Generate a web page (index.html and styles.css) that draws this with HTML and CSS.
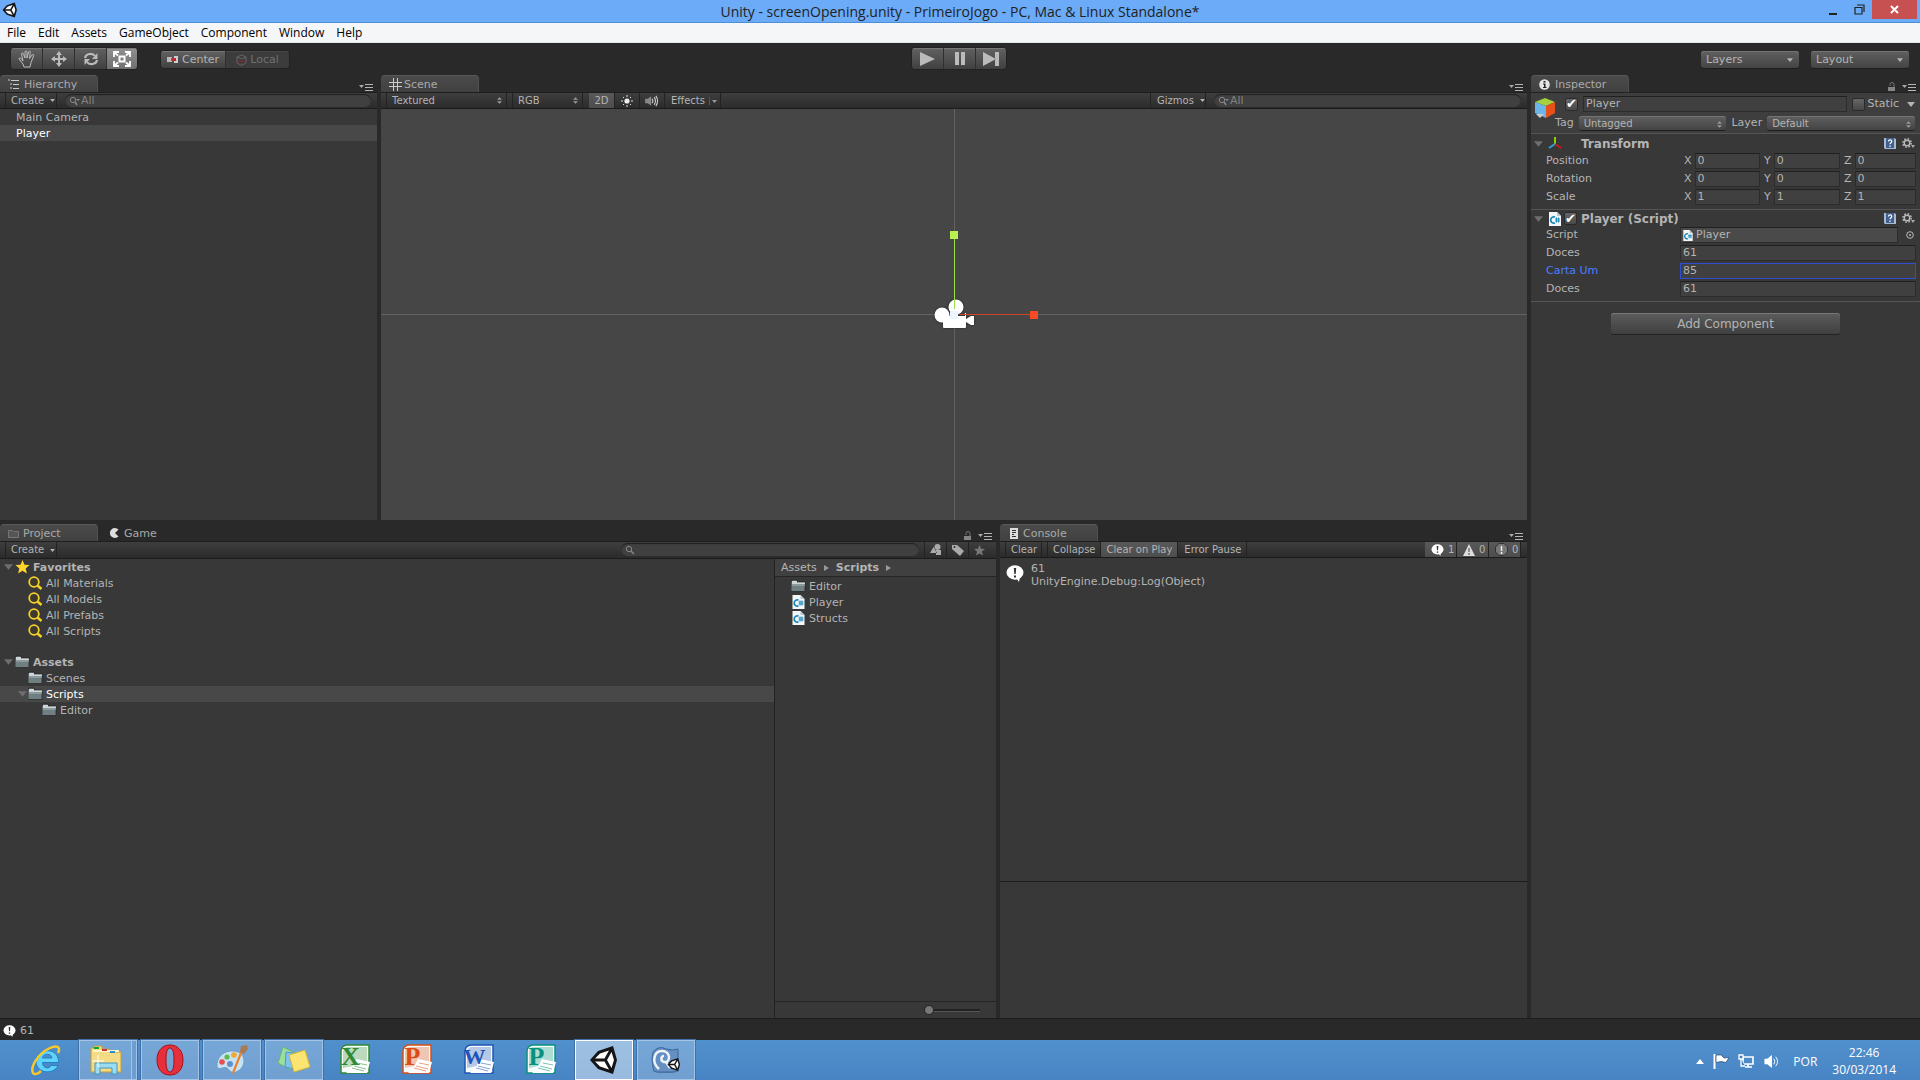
FILE: index.html
```html
<!DOCTYPE html>
<html lang="en">
<head>
<meta charset="utf-8">
<title>Unity - screenOpening.unity - PrimeiroJogo</title>
<link rel="stylesheet" href="styles.css">
</head>
<body>
<svg class="sprite" aria-hidden="true">
  <symbol id="unity" viewBox="0 0 30 30"><path d="M1 15 9 6 24 1 28 15 24 29 9 24Z" fill="#151515"/><path d="M6 13.500 11 8.500 20 5.500 15.500 13.500ZM6 16.500 15.500 16.500 20 24.500 11 21.500ZM22.500 7 25 15 22.500 23 18 15Z" fill="#fff"/></symbol>
  <symbol id="menu" viewBox="0 0 14 8"><path d="M0 2h5L2.500 5z" fill="#aaa"/><path d="M6 1.500h8M6 4.500h8M6 7.500h8" stroke="#b4b4b4"/></symbol>
  <symbol id="down" viewBox="0 0 8 5"><path d="M0 0h8L4 5z" fill="currentColor"/></symbol>
  <symbol id="updown" viewBox="0 0 6 8"><path d="M0 3h6L3 0zM0 5h6L3 8z" fill="#999"/></symbol>
  <symbol id="right" viewBox="0 0 5 6"><path d="M0 0v6l5-3z" fill="#999"/></symbol>
  <symbol id="search" viewBox="0 0 12 10"><circle cx="4" cy="4" r="2.700" fill="none" stroke="#888"/><path d="m6 6 3 3" stroke="#888" stroke-width="1.500"/></symbol>
  <symbol id="searchdown" viewBox="0 0 12 10"><circle cx="4" cy="4" r="2.700" fill="none" stroke="#888"/><path d="m6 6 2 3" stroke="#888" stroke-width="1.500"/><path d="M7 3h4L9 5z" fill="#888"/></symbol>
  <symbol id="mag" viewBox="0 0 15 14"><circle cx="6" cy="6" r="4.800" fill="#3b3a2c" stroke="#f5d02a" stroke-width="1.800"/><path d="m9.500 9.500 4 3.500" stroke="#f5d02a" stroke-width="2.500"/></symbol>
  <symbol id="folder" viewBox="0 0 15 12"><path d="M0 11.500V1h1V0h5v2h8v9.500z" fill="#6f7f82" stroke="#222" stroke-width=".7"/><path d="M1 1h5v1.500h8V4H1z" fill="#cfd5d6"/><path d="M1 5h13" stroke="#a9b6b8"/></symbol>
  <symbol id="lock" viewBox="0 0 8 9"><path d="M2 4V2.500a2 2 0 0 1 4 0V5" fill="none" stroke="#777"/><path d="M0 5h7v4H0z" fill="#858585"/></symbol>
  <symbol id="cs" viewBox="0 0 12 14"><path d="M0 0h8l4 4v10H0z" fill="#f3f6f8"/><path d="m8 0 4 4H8z" fill="#b8c6cf"/><path d="M6 5a3.200 3.200 0 1 0 0 6" fill="none" stroke="#1685b8" stroke-width="1.700"/><path d="M7.500 5.500v5M9.500 5.500v5M6 7h5M6 9h5" stroke="#1685b8" stroke-width=".9"/></symbol>
  <symbol id="info" viewBox="0 0 18 17"><ellipse cx="9" cy="7.500" rx="8.500" ry="7.200" fill="#fff"/><path d="m10 13 3 4 1-5z" fill="#fff"/><path d="M7.800 3h2.400l-.5 6H8.300zM8 10.500h2v2H8z" fill="#333"/></symbol>
  <symbol id="book" viewBox="0 0 12 13"><path d="M0 1h10l2 1v10H1L0 11z" fill="#a9b9cf"/><path d="M2 1h8v10H2z" fill="#40608f"/><path d="M4.500 4.500c0-2.500 3.500-2 3.200.2C7.500 6 6 6 6 7.300M6 8.500V10" fill="none" stroke="#fff" stroke-width="1.200"/></symbol>
  <symbol id="gear" viewBox="0 0 13 11"><circle cx="5" cy="5" r="2.800" fill="none" stroke="#b9b9b9" stroke-width="1.500"/><circle cx="5" cy="5" r="4.200" fill="none" stroke="#b9b9b9" stroke-width="1.500" stroke-dasharray="1.650 1.650"/><path d="M9 7h4l-2 3z" fill="#aaa"/></symbol>
  <symbol id="star" viewBox="0 0 14 14"><path d="m7 0 2 4.700 5 .4-3.800 3.300L11.400 13.500 7 10.800 2.600 13.500 3.800 8.400 0 5.100l5-.4z" fill="currentColor"/></symbol>
  <symbol id="speaker" viewBox="0 0 16 14"><path d="M0 4.500h3l4-3v11l-4-3H0z" fill="#888"/><path d="M8 4.500q2 2.500 0 5M10.500 2.500q3 4.500 0 9M12.500 1q4 6 0 12" fill="none" stroke="#ccc" stroke-width="1.300"/></symbol>
  <symbol id="sound" viewBox="0 0 16 16"><path d="M1 5h3l5-4v14l-5-4H1z" fill="currentColor"/><path d="M11 5q2 3 0 6M13 3q4 5 0 10" fill="none" stroke="currentColor"/></symbol>
  <symbol id="office" viewBox="0 0 30 30"><path d="M7 1h22v28H1V7a6 6 0 0 1 6-6z" fill="#f7fbf8" stroke="currentColor" stroke-width="1.500"/><path d="M8 3h19v16L3 24V8a5 5 0 0 1 5-5z" fill="currentColor" opacity=".3"/><path d="m16 15 14 3-3 11H6l6-6z" fill="#fff"/><path d="m14 22 12 3M12 24l12 3M17 19l10 2" stroke="currentColor" opacity=".55"/></symbol>
</svg>

<header class="titlebar">
  <svg class="app-logo"><use href="#unity"/></svg>
  <h1 class="title">Unity - screenOpening.unity - PrimeiroJogo - PC, Mac &amp; Linux Standalone*</h1>
  <div class="window-buttons">
    <button class="win" aria-label="Minimize"><svg width="10" height="11"><path d="M1 10h8" stroke="#222" stroke-width="2"/></svg></button>
    <button class="win" aria-label="Restore"><svg width="11" height="11"><path d="M3 1h7v7M1 3.500h7V10H1z" fill="none" stroke="#222" stroke-width="1.200"/></svg></button>
    <button class="win close" aria-label="Close"><svg width="9" height="9"><path d="m1 1 7 7M8 1 1 8" stroke="#fff" stroke-width="2"/></svg></button>
  </div>
</header>

<nav class="menubar">
  <button>File</button><button>Edit</button><button>Assets</button><button>GameObject</button><button>Component</button><button>Window</button><button>Help</button>
</nav>

<div class="main-toolbar">
  <div class="tools">
    <div class="group">
      <button aria-label="Hand"><svg width="18" height="18" viewBox="0 0 18 18"><path d="M6 17 5 14 1 9c0-1.500 1.500-1.500 2.500 0L5 11 3.500 4c0-1.500 1.500-1.500 2 0L7 8V2c.2-1.500 1.800-1.500 2 0v6l1.500-6c.5-1.200 2-1 1.800.4L11.500 8.500 14 5c1-1 2.200-.2 1.600 1L13 12.500 12 17z" fill="none" stroke="#bbb"/></svg></button>
      <button aria-label="Move"><svg width="16" height="16" viewBox="0 0 16 16"><path d="M8 2v12M2 8h12" stroke="#bbb" stroke-width="2"/><path d="m8 0 3 4H5zM8 16l3-4H5zM0 8l4-3v6zM16 8l-4-3v6z" fill="#bbb"/></svg></button>
      <button aria-label="Rotate"><svg width="16" height="14" viewBox="0 0 16 14"><path d="M2 6c1-5 8-5 10-2M14 8c-1 5-8 5-10 2" fill="none" stroke="#bbb" stroke-width="2.200"/><path d="M14.500 1v6H9zM1.500 13V7H7z" fill="#bbb"/></svg></button>
      <button class="on" aria-label="Scale"><svg width="18" height="16" viewBox="0 0 18 16"><path d="M6.500 5.500h5v5h-5z" fill="none" stroke="#fff" stroke-width="2"/><path d="m2 2 3 2.500M16 2l-3 2.500M2 14l3-2.500M16 14l-3-2.500M1 6V1h5M12 1h5v5M1 10v5h5M12 15h5v-5" fill="none" stroke="#fff" stroke-width="1.800"/></svg></button>
    </div>
    <div class="group pivot">
      <button><svg width="12" height="8"><path d="M0 1h5v5H0z" fill="#bbb"/><path d="M7 0h4v7H7V5h2V2H7z" fill="#ccc"/><path d="M4 3.500h4" stroke="#d23" stroke-width="2.500"/></svg>Center</button>
      <button class="dim"><svg width="11" height="12" viewBox="0 0 11 12"><path d="m5.500 1 4.500 2v6l-4.500 2.500L1 9V3zM1 3l4.500 2L10 3" fill="none" stroke="#666"/><path d="M5.500 5v6M1 9l4.500-2.500L10 9" stroke="#8a2525" fill="none"/></svg>Local</button>
    </div>
  </div>
  <div class="group play">
    <button aria-label="Play"><svg width="15" height="14"><path d="M0 0v14l15-7z" fill="#bbb"/></svg></button>
    <button aria-label="Pause"><svg width="10" height="13"><path d="M0 0h4v13H0zM6 0h4v13H6z" fill="#bbb"/></svg></button>
    <button aria-label="Step"><svg width="16" height="14"><path d="M0 0v14l13-7zM12 0h4v14h-4z" fill="#bbb"/></svg></button>
  </div>
  <div class="toolbar-selects">
    <div class="drop"><select aria-label="Layers"><option>Layers</option></select><svg width="6" height="4"><use href="#down"/></svg></div>
    <div class="drop"><select aria-label="Layout"><option>Layout</option></select><svg width="6" height="4"><use href="#down"/></svg></div>
  </div>
</div>

<main class="workspace">
  <div class="docks">
    <div class="dock-top">
      <section class="panel">
        <div class="tabs">
          <button class="tab on"><svg width="12" height="10"><path d="M0 1h2M3 1.500h8M2 5h2M5 5.500h6M2 9h2M5 9.500h6" stroke="#ccc"/></svg>Hierarchy</button>
          <span class="corner"><svg class="menu"><use href="#menu"/></svg></span>
        </div>
        <div class="strip">
          <button class="cell create">Create<svg width="5" height="3" viewBox="0 0 8 5"><use href="#down"/></svg></button>
          <label class="search grow"><svg width="12" height="10"><use href="#searchdown"/></svg><input placeholder="All" aria-label="Search hierarchy"></label>
        </div>
        <ul class="list body hierarchy">
          <li>Main Camera</li>
          <li class="selected">Player</li>
        </ul>
      </section>

      <section class="panel">
        <div class="tabs">
          <button class="tab on scene-tab"><svg width="13" height="13"><path d="M4.500 0v13M8.500 0v13M0 4.500h13M0 8.500h13" stroke="#ccc"/></svg>Scene</button>
          <span class="corner"><svg class="menu"><use href="#menu"/></svg></span>
        </div>
        <div class="strip">
          <div class="cell mode"><select aria-label="Draw mode"><option>Textured</option></select><svg width="5" height="7"><use href="#updown"/></svg></div>
          <div class="cell mode rgb"><select aria-label="Render mode"><option>RGB</option></select><svg width="5" height="7"><use href="#updown"/></svg></div>
          <button class="cell toggle pressed">2D</button>
          <button class="cell toggle" aria-label="Lighting"><svg width="12" height="12" viewBox="0 0 12 12"><circle cx="6" cy="6" r="2.600" fill="#eee"/><path d="M6 0v2M6 10v2M0 6h2M10 6h2M2 2l1 1M9 9l1 1M10 2 9 3M3 9l-1 1" stroke="#ddd"/></svg></button>
          <button class="cell toggle" aria-label="Audio"><svg width="14" height="12"><use href="#speaker"/></svg></button>
          <button class="cell effects">Effects<svg width="8" height="8" viewBox="0 0 8 8"><path d="M.5 0v8" stroke="#555"/><path d="M3 3h5L5.500 6z" fill="#999"/></svg></button>
          <span class="grow"></span>
          <button class="cell gizmos">Gizmos<svg width="5" height="3" viewBox="0 0 8 5"><use href="#down"/></svg></button>
          <label class="search scene-search"><svg width="12" height="10"><use href="#searchdown"/></svg><input placeholder="All" aria-label="Search scene"></label>
        </div>
        <div class="body scene">
          <svg class="gizmo" viewBox="0 0 170 170"><g filter="drop-shadow(0 0 1px #222)"><circle cx="73" cy="85" r="7.500" fill="#fff"/><circle cx="87" cy="77" r="7.500" fill="#fff"/><path d="M74 86h22v-3h1v14q0 1-1 1H75q-1 0-1-1zM97 89l5-3h3v9h-3l-5-3z" fill="#fff"/></g><path d="M85.500 9v70" stroke="#9be04a"/><path d="M91 84.500h75" stroke="#d04425"/><path d="M81 1h8v8h-8z" fill="#b9f24e"/><path d="M161 81h8v8h-8z" fill="#f84a24"/><path d="M81 81h8v8h-8z" fill="#edf4ff"/></svg>
        </div>
      </section>
    </div>

    <div class="dock-bottom">
      <section class="panel">
        <div class="tabs">
          <button class="tab on"><svg width="11" height="9"><path d="M.5 1.500h4l1 1h5v6H.5z" fill="#555" stroke="#777"/></svg>Project</button>
          <button class="tab"><svg width="10" height="10"><path d="M8.500 1.500a5 5 0 1 0 0 7L5 5z" fill="#ddd"/></svg>Game</button>
          <span class="corner"><svg width="8" height="9"><use href="#lock"/></svg><svg class="menu"><use href="#menu"/></svg></span>
        </div>
        <div class="strip tall">
          <button class="cell create">Create<svg width="5" height="3" viewBox="0 0 8 5"><use href="#down"/></svg></button>
          <span class="grow"></span>
          <label class="search project-search"><svg width="12" height="10"><use href="#search"/></svg><input aria-label="Search project"></label>
          <button class="cell filter" aria-label="Filter by type"><svg width="12" height="12"><path d="M0 9h7L3.500 3zM6 6h5v5H6z" fill="#aaa"/><circle cx="7.500" cy="3" r="3" fill="#aaa"/></svg></button>
          <button class="cell filter" aria-label="Filter by label"><svg width="12" height="12"><path d="M0 1h5l7 6-4 5-8-7z" fill="#aaa"/><circle cx="2.500" cy="3" r="1" fill="#333"/></svg></button>
          <button class="cell filter faint" aria-label="Save search"><svg width="11" height="11"><use href="#star"/></svg></button>
        </div>
        <div class="body project">
          <ul class="list tree">
            <li class="root"><svg class="fold"><use href="#down"/></svg><svg class="ico gold"><use href="#star"/></svg>Favorites</li>
            <li class="l1"><svg class="ico"><use href="#mag"/></svg>All Materials</li>
            <li class="l1"><svg class="ico"><use href="#mag"/></svg>All Models</li>
            <li class="l1"><svg class="ico"><use href="#mag"/></svg>All Prefabs</li>
            <li class="l1"><svg class="ico"><use href="#mag"/></svg>All Scripts</li>
            <li class="root spaced"><svg class="fold"><use href="#down"/></svg><svg class="ico"><use href="#folder"/></svg>Assets</li>
            <li class="l1"><svg class="ico"><use href="#folder"/></svg>Scenes</li>
            <li class="l1 open selected"><svg class="fold"><use href="#down"/></svg><svg class="ico"><use href="#folder"/></svg>Scripts</li>
            <li class="l2"><svg class="ico"><use href="#folder"/></svg>Editor</li>
          </ul>
          <div class="files">
            <nav class="crumbs"><a href="#">Assets</a><svg width="5" height="6"><use href="#right"/></svg><a href="#" class="current">Scripts</a><svg width="5" height="6"><use href="#right"/></svg></nav>
            <ul class="list">
              <li><svg class="ico"><use href="#folder"/></svg>Editor</li>
              <li><svg class="ico"><use href="#cs"/></svg>Player</li>
              <li><svg class="ico"><use href="#cs"/></svg>Structs</li>
            </ul>
            <div class="zoom-row"><input type="range" min="0" max="100" value="0" aria-label="Icon size"></div>
          </div>
        </div>
      </section>

      <section class="panel">
        <div class="tabs">
          <button class="tab on console-tab"><svg width="9" height="11"><path d="M0 0h8v11H0z" fill="#ddd"/><path d="M2 2.500h4M2 4.500h4M2 6.500h2M2 8.500h4" stroke="#333"/></svg>Console</button>
          <span class="corner"><svg class="menu"><use href="#menu"/></svg></span>
        </div>
        <div class="strip">
          <button class="cell clear">Clear</button>
          <button class="cell con collapse">Collapse</button>
          <button class="cell con pressed">Clear on Play</button>
          <button class="cell con">Error Pause</button>
          <span class="grow"></span>
          <button class="cell count pressed"><svg width="13" height="12"><use href="#info"/></svg>1</button>
          <button class="cell count pressed"><svg width="12" height="12"><path d="m6 0 6 12H0z" fill="#ddd"/><path d="M6 4v4M6 9v2" stroke="#777" stroke-width="1.500"/></svg>0</button>
          <button class="cell count pressed"><svg width="13" height="13"><path d="M4 .5h5L12.500 4v5L9 12.500H4L.5 9V4z" fill="#777" stroke="#333"/><path d="M6.500 3v5M6.500 9v2" stroke="#eee" stroke-width="1.500"/></svg>0</button>
        </div>
        <div class="body console">
          <div class="log"><svg width="18" height="17"><use href="#info"/></svg><p>61<br>UnityEngine.Debug:Log(Object)</p></div>
          <div class="detail"></div>
        </div>
      </section>
    </div>
  </div>

  <section class="panel inspector">
    <div class="tabs">
      <button class="tab on inspector-tab"><svg width="11" height="11"><circle cx="5.500" cy="5.500" r="5.300" fill="#e5e5e5"/><path d="M4.500 2h2v1.500h-2zM4 4.500h2.500V8H7.500v1H4V8h1V5.500H4z" fill="#222"/></svg>Inspector</button>
      <span class="corner"><svg width="8" height="9"><use href="#lock"/></svg><svg class="menu"><use href="#menu"/></svg></span>
    </div>
    <div class="body">
      <div class="object">
        <svg class="cube" viewBox="0 0 20 20"><path d="m10 0 10 4-9 4L0 4z" fill="#a5cf3c"/><path d="m0 4 11 4v12L0 15z" fill="#6bb5e8"/><path d="m20 4-9 4v12l9-5z" fill="#e8501a"/><path d="M1 16h8l-4 4z" fill="#ccc"/></svg>
        <div class="object-fields">
          <div class="object-row identity">
            <input type="checkbox" checked aria-label="Active">
            <input class="field name" value="Player" aria-label="Name">
            <label class="static"><input type="checkbox">Static</label>
            <svg width="8" height="5"><use href="#down"/></svg>
          </div>
          <div class="object-row tags">
            <label for="tag">Tag</label><div class="drop small"><select id="tag"><option>Untagged</option></select><svg width="5" height="7"><use href="#updown"/></svg></div>
            <label for="layer">Layer</label><div class="drop small"><select id="layer"><option>Default</option></select><svg width="5" height="7"><use href="#updown"/></svg></div>
          </div>
        </div>
      </div>

      <div class="component">
        <h2><svg class="fold"><use href="#down"/></svg><svg width="14" height="14" viewBox="0 0 14 14"><path d="M7 8V0" stroke="#8bd000" stroke-width="2"/><path d="m7 7-6 4" stroke="#29a5e0" stroke-width="2"/><path d="m7 7 6 4" stroke="#d01818" stroke-width="2"/></svg><span class="comp-name wide">Transform</span><svg width="12" height="13"><use href="#book"/></svg><svg width="13" height="11"><use href="#gear"/></svg></h2>
        <div class="vector"><span>Position</span><label>X<input class="field" value="0"></label><label>Y<input class="field" value="0"></label><label>Z<input class="field" value="0"></label></div>
        <div class="vector"><span>Rotation</span><label>X<input class="field" value="0"></label><label>Y<input class="field" value="0"></label><label>Z<input class="field" value="0"></label></div>
        <div class="vector"><span>Scale</span><label>X<input class="field" value="1"></label><label>Y<input class="field" value="1"></label><label>Z<input class="field" value="1"></label></div>
      </div>

      <div class="component script">
        <h2><svg class="fold"><use href="#down"/></svg><svg width="14" height="14"><use href="#cs"/></svg><input type="checkbox" checked aria-label="Enabled"><span class="comp-name">Player (Script)</span><svg width="12" height="13"><use href="#book"/></svg><svg width="13" height="11"><use href="#gear"/></svg></h2>
        <div class="prop"><span>Script</span><button class="field object-ref"><svg width="10" height="11"><use href="#cs"/></svg>Player</button><svg width="8" height="8"><circle cx="4" cy="4" r="3.300" fill="none" stroke="#bbb"/><circle cx="4" cy="4" r="1" fill="#bbb"/></svg></div>
        <label class="prop"><span>Doces</span><input class="field" value="61"></label>
        <label class="prop active"><span>Carta Um</span><input class="field" value="85"></label>
        <label class="prop"><span>Doces</span><input class="field" value="61"></label>
      </div>
      <button class="add">Add Component</button>
    </div>
  </section>
</main>

<div class="status"><svg width="13" height="12"><use href="#info"/></svg>61</div>

<footer class="taskbar">
  <div class="apps">
    <button aria-label="Internet Explorer"><svg width="32" height="32" viewBox="0 0 32 32"><path d="M28.500 18.500H12.500c0 6 7 7 8.500 3h7C24 31 6 30 6 17 6 4 29 2 28.500 18.500zM12.500 14h9.500c-.5-5-9-5-9.500 0z" fill="#63d2fa" stroke="#1c83c8"/><path d="M28 9c3-6-1-9-10-4C8 10 0 23 3 29c1 2 5 1 8-2" fill="none" stroke="#f8c928" stroke-width="2.500"/></svg></button>
    <button class="running stacked" aria-label="File Explorer"><svg width="34" height="32" viewBox="0 0 34 32"><path d="M2 28V4h3V2h8v3h7v3h12v20z" fill="#f5dc84" stroke="#c79c39"/><path d="M4 7h26" stroke="#fff6c8" stroke-width="2"/><path d="M5 3h5v2H5z" fill="#0a3"/><path d="M13 5h5v2h-5z" fill="#c33"/><path d="M21 7h5v2h-5z" fill="#38c"/><path d="M6 30V19h22v11h-5v-6H11v6z" fill="#9bdcf2" stroke="#4597bd"/><path d="M9 11v12M3 17h12" stroke="#fff"/></svg></button>
    <button class="running" aria-label="Opera"><svg width="30" height="32" viewBox="0 0 30 32"><path fill-rule="evenodd" d="M15 1c8 0 13 6 13 15s-5 15-13 15S2 25 2 16 7 1 15 1zm0 3c-3 0-4 5-4 12s1 12 4 12 4-5 4-12-1-12-4-12z" fill="#e62f3a" stroke="#a9101b"/></svg></button>
    <button class="running" aria-label="Paint"><svg width="32" height="32" viewBox="0 0 32 32"><path d="M1 23C0 13 8 6 18 7c12 1 13 15 4 20-7 4-8-1-11-3-4-2-8 3-10-1z" fill="#c7e2f3" stroke="#6da0c4"/><circle cx="6" cy="18" r="2.800" fill="#e64f4f"/><circle cx="11" cy="13" r="2.600" fill="#5dbb4b"/><circle cx="18" cy="11" r="2.800" fill="#f2a72d"/><circle cx="14" cy="20" r="3" fill="#6091c8"/><path d="m27 7-8 20-4 4 2-5 8-20z" fill="#e8812f"/><path d="m24 8 1-6 6-1 1 4-4 5z" fill="#a97b55"/></svg></button>
    <button class="running" aria-label="Sticky Notes"><svg width="34" height="28" viewBox="0 0 34 28"><path d="m6 1 14 7-6 16L1 17z" fill="#9bdf9c" stroke="#68b77a"/><path d="m9 6 15 2-2 16-14-3z" fill="#7fc3f2" stroke="#4c94cf"/><path d="m12 9 16-5 5 17-16 5z" fill="#fce473" stroke="#d3b337"/></svg></button>
    <button class="excel"><svg><use href="#office"/></svg><b>X</b></button>
    <button class="ppt"><svg><use href="#office"/></svg><b>P</b></button>
    <button class="word"><svg><use href="#office"/></svg><b>W</b></button>
    <button class="pub"><svg><use href="#office"/></svg><b>P</b></button>
    <button class="running focused" aria-label="Unity"><svg width="30" height="30"><use href="#unity"/></svg></button>
    <button class="running" aria-label="MonoDevelop"><svg width="32" height="30" viewBox="0 0 32 30"><ellipse cx="16" cy="26" rx="13" ry="2" fill="#345b86" opacity=".5"/><path d="M3 7Q9 0 16 4q7 2 12 0v18q0 5-6 5H8q-5 0-5-5l-1-8z" fill="#668fc2" stroke="#3c6799"/><path d="M9 24C1 17 4 6 12 6c9 0 9 12 2 11-4-1-3-6 0-6M16 17l4 6" fill="none" stroke="#eef3f8" stroke-width="2.500"/><svg x="17" y="12" width="14" height="15"><use href="#unity"/></svg></svg></button>
  </div>
  <div class="tray">
    <svg width="8" height="5" viewBox="0 0 8 5"><path d="M0 5h8L4 0z" fill="#fff"/></svg>
    <svg width="16" height="16" viewBox="0 0 16 16"><path d="M1.500 1v15" stroke="#fff" stroke-width="2"/><path d="M3 2h6v1l2 2 5-.5-3 5-5-1-5 1z" fill="#fff" stroke="#29486e" stroke-width=".7"/></svg>
    <svg width="16" height="15" viewBox="0 0 16 15"><path d="M5 3h10v7H5zM7 13h7M10 10v3" fill="none" stroke="#fff" stroke-width="1.600"/><path d="M1 1h4v4H1zM3 5v7h4" fill="#4a7db5" stroke="#fff" stroke-width="1.300"/></svg>
    <svg width="16" height="15"><use href="#sound"/></svg>
    <span class="lang">POR</span>
    <time>22:46<br>30/03/2014</time>
  </div>
</footer>
</body>
</html>
```
FILE: styles.css
```css
* { box-sizing: border-box; }
body {
  margin: 0;
  height: 100vh;
  display: flex;
  flex-direction: column;
  overflow: hidden;
  background: #292929;
  color: #b4b4b4;
  font: 11px/16px "DejaVu Sans", Verdana, sans-serif;
}
svg { display: block; flex: none; }
.sprite { width: 0; height: 0; position: absolute; }
button, input, select { font: inherit; color: inherit; margin: 0; padding: 0; border: 0; background: none; border-radius: 0; min-width: 0; }
button { display: flex; align-items: center; }
select { appearance: none; outline: 0; }
ul, h1, h2, p { margin: 0; padding: 0; font: inherit; list-style: none; }
a { color: inherit; text-decoration: none; }
.grow { flex: 1; }

/* window frame */
.titlebar {
  height: 23px;
  flex: none;
  display: grid;
  grid-template-columns: 1fr auto 1fr;
  background: #6babf7;
  border-bottom: 1px solid #4d8fd6;
  color: #222;
}
.app-logo { width: 16px; height: 16px; margin: 2px; }
.title { font: 14px/24px "Open Sans", "Noto Sans", sans-serif; }
.window-buttons { display: flex; justify-content: flex-end; padding-right: 3px; }
.win { width: 26px; height: 19px; justify-content: center; }
.win.close { width: 45px; background: #c75050; }
.menubar {
  height: 20px;
  flex: none;
  display: flex;
  gap: 12px;
  padding-left: 7px;
  background: #f5f6f8;
  border-bottom: 1px solid #e2e8ea;
  color: #000;
  font: 12px/18px "Open Sans", "Noto Sans", sans-serif;
}

/* main toolbar */
.main-toolbar {
  height: 32px;
  flex: none;
  display: grid;
  grid-template-columns: 1fr auto 1fr;
  align-items: start;
  padding-top: 4px;
}
.tools { display: flex; align-items: flex-start; gap: 22px; padding-left: 10px; }
.group { display: flex; border: 1px solid #222; border-radius: 4px; overflow: hidden; }
.group button { width: 31px; height: 21px; justify-content: center; background: linear-gradient(#626262, #404040); box-shadow: inset 0 1px #777; }
.group button + button { border-left: 1px solid #303030; }
.group button:nth-child(n+2) { width: 32px; }
.group button:last-child { width: 31px; }
.group .on { background: linear-gradient(#909090, #707070); }
.pivot { margin-top: 3px; }
.pivot button, .pivot button:nth-child(n+2) { width: 64px; height: 17px; gap: 3px; font-size: 11px; }
.pivot .dim { background: #3c3c3c; box-shadow: inset 0 1px #484848; color: #707070; }
.play { margin-right: 2px; }
.toolbar-selects { display: flex; justify-content: flex-end; gap: 12px; padding: 4px 11px 0 0; }
.drop { display: grid; width: 98px; height: 17px; border-radius: 3px; background: linear-gradient(#606060, #444); box-shadow: inset 0 1px #747474, 0 1px #1c1c1c; }
.drop > *, .mode > * { grid-area: 1 / 1; }
.drop select { width: 100%; padding-left: 5px; }
.drop svg { justify-self: end; align-self: center; margin-right: 6px; }
.drop svg, .mode svg { pointer-events: none; }

/* docked panels */
.workspace { flex: 1; min-height: 0; display: grid; grid-template-columns: 1527fr 389fr; gap: 4px; border-bottom: 1px solid #1c1c1c; }
.docks { display: grid; grid-template-rows: 445fr 494fr; gap: 4px; min-height: 0; min-width: 0; }
.dock-top { display: grid; grid-template-columns: 377fr 1146fr; gap: 4px; min-height: 0; }
.dock-bottom { display: grid; grid-template-columns: 996fr 527fr; gap: 4px; min-height: 0; }
.panel { display: flex; flex-direction: column; min-width: 0; min-height: 0; }
.tabs { height: 17px; flex: none; display: flex; }
.tab { width: 98px; padding: 2px 0 0 8px; gap: 4px; color: #aaa; }
.tab.on { background: linear-gradient(#4a4a4a, #414141); border-top: 1px solid #5a5a5a; border-right: 1px solid #505050; border-radius: 4px 4px 0 0; }
.tab:not(.on) { padding-left: 12px; }
.tab svg { margin-bottom: 2px; }
.corner { margin-left: auto; display: flex; align-items: flex-end; gap: 6px; padding: 0 4px 1px 0; }
.menu { width: 14px; height: 8px; }
.strip {
  height: 17px;
  flex: none;
  display: flex;
  align-items: stretch;
  padding: 0 6px 0 5px;
  background: linear-gradient(#3e3e3e, #2b2b2b);
  border-top: 1px solid #1e1e1e;
  border-bottom: 1px solid #1b1b1b;
  font-size: 10px;
  line-height: 14px;
}
.tall { height: 18px; }
.cell { flex: none; border-right: 1px solid #222; white-space: nowrap; }
.create { width: 52px; padding-left: 5px; gap: 6px; border-left: 1px solid #222; }
.search { display: flex; align-items: center; height: 13px; margin: 1px 0 0 8px; padding-left: 4px; border-radius: 7px; background: #404040; box-shadow: inset 0 1px 1px #1e1e1e; font-size: 11px; }
.search input { width: 100%; outline: 0; line-height: 12px; }
.search input::placeholder { color: #808080; opacity: 1; }
.mode { display: grid; width: 121px; padding: 0 4px 0 5px; border-left: 1px solid #222; }
.mode svg { justify-self: end; align-self: center; }
.rgb { width: 71px; margin: 0 6px 0 5px; }
.toggle { width: 26px; justify-content: center; }
.toggle:not(.pressed) { width: 25px; }
.pressed { background: linear-gradient(#595959, #4d4d4d); }
.effects { width: 56px; padding-left: 6px; gap: 4px; }
.gizmos { width: 56px; padding-left: 6px; gap: 6px; border-left: 1px solid #222; }
.scene-search { width: 307px; }
.project-search { width: 298px; margin-right: 5px; }
.filter { width: 22px; justify-content: center; border-left: 1px solid #222; border-right: 0; }
.faint { color: #777; }
.body { flex: 1; min-height: 0; background: #383838; }
.list li { height: 16px; display: flex; align-items: center; gap: 4px; padding-top: 2px; }
.list li svg { margin-bottom: 2px; }
.list .selected { background: #484848; color: #fff; }
.hierarchy li { padding-left: 16px; }

.scene {
  display: grid;
  place-items: center;
  background: linear-gradient(#626262, #626262) 50% 0 / 1px 100% no-repeat, linear-gradient(#626262, #626262) 0 50% / 100% 1px no-repeat, #464646;
}
.gizmo { width: 170px; height: 170px; }
.scene-tab { padding-left: 8px; gap: 2px; }

.project { display: grid; grid-template-columns: 774fr 222fr; }
.ico { width: 15px; height: 14px; }
.gold { color: #ffd42a; }
.fold { width: 9px; height: 8px; color: #6e6e6e; }
.tree .root { padding-left: 4px; gap: 2px; font-weight: bold; }
.tree .root .ico { margin-right: 1px; }
.tree .spaced { margin-top: 15px; }
.tree .l1 { padding-left: 28px; gap: 3px; }
.tree .l2 { padding-left: 42px; gap: 3px; }
.tree .open { padding-left: 18px; gap: 1px; }
.tree .open .ico { margin-right: 2px; }
.files { display: flex; flex-direction: column; border-left: 1px solid #222; }
.files .list { flex: 1; padding: 1px 0 0 16px; }
.files .list li { gap: 3px; }
.crumbs { height: 18px; display: flex; align-items: center; gap: 7px; padding-left: 6px; background: #404040; border-bottom: 1px solid #252525; }
.current { font-weight: bold; }
.zoom-row { height: 17px; display: flex; justify-content: flex-end; align-items: center; padding-right: 16px; border-top: 1px solid #252525; }
.zoom-row input { appearance: none; width: 56px; height: 3px; background: #222; border-bottom: 1px solid #555; }
.zoom-row input::-webkit-slider-thumb { appearance: none; width: 10px; height: 10px; border-radius: 5px; background: #777; border: 1px solid #222; }

.console-tab { padding-left: 10px; gap: 4px; }
.clear { width: 37px; padding-left: 5px; border-left: 1px solid #222; }
.con { padding: 0 5px 0 6px; }
.collapse { margin-left: 5px; border-left: 1px solid #222; padding: 0 4px 0 5px; }
.count { width: 32px; padding-left: 6px; gap: 4px; }
.console { display: grid; grid-template-rows: 323fr 137fr; }
.log { display: flex; gap: 7px; padding: 4px 6px; line-height: 13px; }
.log svg { margin-top: 3px; }
.detail { border-top: 1px solid #1c1c1c; }

/* inspector */
.inspector-tab { gap: 5px; }
.inspector > .body { border-top: 1px solid #222; }
.object { display: flex; padding: 3px 5px 2px 4px; background: #3e3e3e; border-bottom: 1px solid #555; height: 41px; }
.cube { width: 20px; height: 20px; margin-top: 2px; }
.object-fields { flex: 1; min-width: 0; }
.object-row { display: flex; align-items: center; height: 16px; gap: 5px; }
input[type="checkbox"] { appearance: none; width: 13px; height: 13px; flex: none; display: grid; place-items: center; border: 1px solid #2a2a2a; border-radius: 2px; background: linear-gradient(#666, #484848); }
input[type="checkbox"]:checked::before { content: "✔"; color: #fff; font-size: 13px; line-height: 10px; }
.identity { padding-left: 10px; }
.field { height: 16px; background: #404040; border: 1px solid #2c2c2c; border-top-color: #202020; padding: 0 2px; outline: 0; }
.name { flex: 1; }
.static { display: flex; align-items: center; gap: 3px; }
.object-row > svg { margin-left: 3px; }
.tags { margin-top: 3px; }
.tags .drop { flex: 1; height: 14px; font-size: 10px; }
.tags .drop svg { margin-right: 4px; }
.component { border-bottom: 1px solid #555; padding: 1px 4px 2px 10px; }
.component h2 { height: 18px; display: flex; align-items: center; gap: 4px; padding-bottom: 1px; margin-left: -7px; font-weight: bold; font-size: 12px; }
.component h2 .fold { margin-right: 1px; }
.component h2 .fold + svg { margin-right: -2px; }
.component h2 svg:last-child { margin: 0 1px 0 2px; }
.comp-name { flex: 1; }
.wide { padding-left: 17px; }
.vector { display: grid; grid-template-columns: 134px 76px 76px 1fr; gap: 4px; height: 16px; margin-bottom: 2px; padding-left: 5px; }
.vector > :first-child { margin-right: 4px; }
.vector label { display: flex; gap: 3px; min-width: 0; }
.vector .field { flex: 1; width: 0; }
.script { padding-bottom: 2px; }
.script h2 { height: 16px; }
.prop { display: grid; grid-template-columns: 134px 1fr auto; height: 16px; margin-bottom: 2px; padding-left: 5px; align-items: center; }
.object-ref { background: #4a4a4a; gap: 3px; margin-right: 8px; }
.prop > svg { margin-right: 2px; }
.active { color: #4d7fff; }
.active .field { color: #b4b4b4; border: 1px solid #2f4fd0; }
.add { width: 59%; height: 21px; margin: 11px auto 0; justify-content: center; font-size: 12px; border-radius: 3px; background: linear-gradient(#5c5c5c, #404040); box-shadow: inset 0 1px #777, 0 1px #222; }

.status { height: 21px; flex: none; display: flex; align-items: center; gap: 4px; padding: 2px 0 0 3px; }

/* taskbar */
.taskbar { height: 40px; flex: none; display: flex; justify-content: space-between; background: linear-gradient(#5090cc, #4884c4); color: #fff; }
.apps { display: flex; gap: 4px; padding-left: 17px; }
.apps button { width: 58px; height: 40px; display: grid; place-items: center; border: 1px solid transparent; }
.apps .running { background: #ffffff38; border-color: #a5c4e5; box-shadow: 0 0 0 1px #3f70a8; }
.apps .stacked { box-shadow: 0 0 0 1px #3f70a8, inset -4px 0 #6d9ed3, inset -5px 0 #a5c4e5; padding-right: 5px; }
.apps .focused { background: #ffffff70; border: 1px solid #fff; }
.excel, .ppt, .word, .pub { font: 26px/26px "Liberation Serif", serif; }
.excel > *, .ppt > *, .word > *, .pub > * { grid-area: 1 / 1; }
.excel > svg, .ppt > svg, .word > svg, .pub > svg { width: 30px; height: 30px; }
.apps b { margin: 0 8px 4px 0; }
.apps .excel, .apps .ppt, .apps .word, .apps .pub { padding: 0 3px 2px 0; }
.excel { color: #2f8a35; }
.ppt { color: #db4d14; }
.word { color: #1f54b8; font-size: 22px; }
.pub { color: #07927e; }
.tray { display: flex; align-items: center; gap: 9px; padding: 2px 24px 0 0; font: 12px/17px "Open Sans", "Noto Sans", sans-serif; }
.lang { margin: 0 6px 0 5px; }
.tray time { text-align: center; }
```
